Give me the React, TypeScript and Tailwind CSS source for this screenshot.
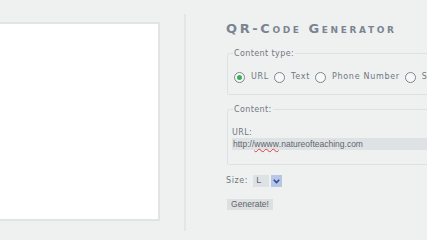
import React from "react";

function Radio({ checked, label }: { checked?: boolean; label: string }) {
  return (
    <div className="flex items-center gap-[6px] shrink-0">
      <span className="flex h-[11px] w-[11px] items-center justify-center rounded-full border border-[#7b8591] bg-[#f7f8f8]">
        {checked && <span className="h-[5px] w-[5px] rounded-full bg-[#3fae5a]" />}
      </span>
      <span className="text-[8px] tracking-[0.7px] text-[#6e7780]">{label}</span>
    </div>
  );
}

export default function App() {
  return (
    <main className="flex h-[240px] w-[427px] overflow-hidden bg-[#eff1f1] font-['DejaVu_Sans',sans-serif]">
      {/* QR preview area */}
      <div className="mt-[22px] h-[199px] w-[160px] shrink-0 border-r-2 border-b-2 border-t-2 border-[#e1e4e4] bg-white" />

      {/* divider */}
      <div className="ml-[24px] mt-[14px] h-[217px] w-[2px] shrink-0 bg-[#e3e6e6]" />

      {/* form */}
      <div className="ml-[40px] flex w-[260px] shrink-0 flex-col">
        <h1 className="mt-[22px] whitespace-nowrap text-[13px] font-bold leading-[14px] tracking-[2.6px] text-[#7b8591] [font-variant:small-caps]">
          QR-Code Generator
        </h1>

        <fieldset className="mt-[13px] ml-[1px] h-[46px] w-[230px] rounded-[2px] border border-[#dde1e1] pl-[5px] pt-[13px]">
          <legend className="px-[1px] text-[8px] leading-[9px] tracking-[0.4px] text-[#6e7780]">Content type:</legend>
          <div className="ml-[1px] flex items-center gap-[5px]">
            <Radio checked label="URL" />
            <Radio label="Text" />
            <Radio label="Phone Number" />
            <Radio label="SMS" />
          </div>
        </fieldset>

        <fieldset className="mt-[10px] ml-[1px] h-[60px] w-[230px] rounded-[2px] border border-[#dde1e1] pl-[4px] pt-[14px]">
          <legend className="ml-[1px] px-[1px] text-[8px] leading-[9px] tracking-[0.4px] text-[#6e7780]">Content:</legend>
          <div className="text-[8px] leading-[9px] tracking-[0.4px] text-[#6e7780]">URL:</div>
          <div className="mt-[1px] flex h-[12px] w-[230px] items-center bg-[#dfe2e4] pl-[1px] font-['Liberation_Sans',sans-serif] text-[8.5px] text-[#60666c]">
            http://
            <span className="underline decoration-wavy decoration-[#d84040] decoration-[1px] underline-offset-[1px]">wwww</span>
            .natureofteaching.com
          </div>
        </fieldset>

        <div className="mt-[10px] flex items-center">
          <span className="text-[8px] tracking-[0.6px] text-[#6e7780]">Size:</span>
          <div className="ml-[5px] flex h-[12px] w-[16px] items-center bg-[#dfe2e4] pl-[3px] font-['Liberation_Sans',sans-serif] text-[9px] text-[#60666c]">L</div>
          <div className="ml-[2px] flex h-[12px] w-[11px] items-center justify-center bg-[#b7c6e4]">
            <svg width="7" height="5" viewBox="0 0 7 5">
              <path d="M0.8 0.8 L3.5 3.6 L6.2 0.8" fill="none" stroke="#2a4aa0" strokeWidth="1.6" />
            </svg>
          </div>
        </div>

        <div className="mt-[12px] ml-[1px] flex h-[11px] w-[46px] items-center justify-center bg-[#dde0e1] font-['Liberation_Sans',sans-serif] text-[8.5px] text-[#5e6468]">
          Generate!
        </div>
      </div>
    </main>
  );
}
